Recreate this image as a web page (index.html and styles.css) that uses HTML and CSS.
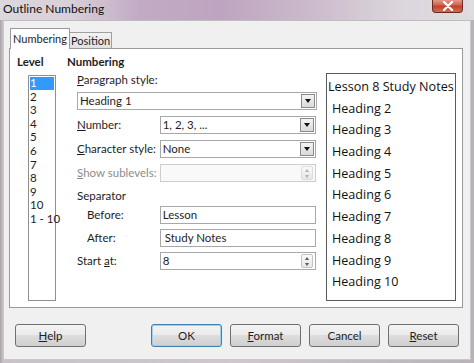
FILE: index.html
```html
<!DOCTYPE html>
<html>
<head>
<meta charset="utf-8">
<link rel="stylesheet" href="styles.css">
</head>
<body>
<div class="window">
  <div class="titlebar">
    <span class="title">Outline Numbering</span>
    <div class="close"><svg width="12" height="10" viewBox="0 0 12 10"><path d="M2 1 L10 9 M10 1 L2 9" stroke="#fff" stroke-width="2.4" stroke-linecap="round"/></svg></div>
  </div>
  <div class="client">
    <div class="tabs">
      <div class="tab active">Numbering</div>
      <div class="tab">Position</div>
    </div>
    <div class="tabpage">
      <div class="levelcol">
        <div class="heading">Level</div>
        <div class="levellist">
          <div class="item sel">1</div>
          <div class="item">2</div>
          <div class="item">3</div>
          <div class="item">4</div>
          <div class="item">5</div>
          <div class="item">6</div>
          <div class="item">7</div>
          <div class="item">8</div>
          <div class="item">9</div>
          <div class="item">10</div>
          <div class="item">1 - 10</div>
        </div>
      </div>
      <div class="numcol">
        <div class="heading">Numbering</div>
        <div class="plabel"><u>P</u>aragraph style:</div>
        <div class="combo wide"><span class="val">Heading 1</span><span class="drop"><i></i></span></div>
        <div class="row"><span class="lbl"><u>N</u>umber:</span><div class="combo"><span class="val">1, 2, 3, ...</span><span class="drop"><i></i></span></div></div>
        <div class="row"><span class="lbl"><u>C</u>haracter style:</span><div class="combo"><span class="val">None</span><span class="drop"><i></i></span></div></div>
        <div class="row"><span class="lbl dis"><u>S</u>how sublevels:</span><div class="field disabled"><span class="val"></span><span class="spin dis"><b class="up"></b><b class="dn"></b></span></div></div>
        <div class="seprow">Separator</div>
        <div class="row r23 first23"><span class="lbl ind">Before:</span><div class="field"><span class="val">Lesson</span></div></div>
        <div class="row r23"><span class="lbl ind">After:</span><div class="field"><span class="val sp">Study Notes</span></div></div>
        <div class="row r23"><span class="lbl">Start <u>a</u>t:</span><div class="field"><span class="val">8</span><span class="spin"><b class="up"></b><b class="dn"></b></span></div></div>
      </div>
      <div class="preview">
        <div class="pline first">Lesson 8 Study Notes</div>
        <div class="pline">Heading 2</div>
        <div class="pline">Heading 3</div>
        <div class="pline">Heading 4</div>
        <div class="pline">Heading 5</div>
        <div class="pline">Heading 6</div>
        <div class="pline">Heading 7</div>
        <div class="pline">Heading 8</div>
        <div class="pline">Heading 9</div>
        <div class="pline">Heading 10</div>
      </div>
    </div>
    <div class="buttons">
      <div class="btn"><u>H</u>elp</div>
      <div class="spacer"></div>
      <div class="btn default">OK</div>
      <div class="btn"><u>F</u>ormat</div>
      <div class="btn">Cancel</div>
      <div class="btn"><u>R</u>eset</div>
    </div>
  </div>
</div>
</body>
</html>
```
FILE: styles.css
```css
* { box-sizing: border-box; }
html, body { margin: 0; padding: 0; }
body {
  width: 474px; height: 363px; overflow: hidden;
  font-family: Lato, "Open Sans", sans-serif;
  font-size: 11.5px; color: #1e1e1e;
}
u { text-decoration: underline; text-underline-offset: 1px; }
.window {
  width: 474px; height: 363px;
  background: linear-gradient(90deg, #a9a4a9 0, #c9c2c9 3px, #cfc6cf 50%, #b9b2b9 100%);
  display: flex; flex-direction: column;
}
.titlebar {
  height: 20px; position: relative;
  background: linear-gradient(90deg, #dcd8dc 0, #d8d0d8 70px, #c2aac4 140px, #bea4c0 220px, #cdbdcd 320px, #dcd6dc 400px, #dedcde 474px);
}
.title {
  position: absolute; left: 3px; top: 1px;
  font-size: 12px; color: #111; line-height: 16px;
}
.close {
  position: absolute; left: 432px; top: -1px; width: 31px; height: 14px;
  background: linear-gradient(180deg, #e5a497 0, #d2644f 45%, #c1402c 55%, #d46b53 100%);
  border: 1px solid #6a2a20; border-top: none;
  border-radius: 0 0 4px 4px;
  display: flex; align-items: center; justify-content: center;
}
.client {
  margin: 0 3px 3px 3px; flex: 1;
  background: #f0f0f0;
  border: 1px solid #c8c8c8; border-top: 1px solid #bdbdbd;
  display: flex; flex-direction: column;
  padding: 0 7px 0 5px;
}
.tabs { display: flex; align-items: flex-end; height: 27px; padding-left: 1px; }
.tab {
  height: 16px; padding: 0 1px; line-height: 15px; font-size: 11px;
  border: 1px solid #a0a0a0; border-bottom: none;
  background: linear-gradient(180deg, #f2f2f2, #e1e1e1);
  margin-left: -1px;
}
.tab.active {
  height: 21px; background: #fff; padding: 0 2px; line-height: 20px;
  position: relative; top: 1px; z-index: 1; margin-left: 0;
  border-color: #9a9a9a;
}
.tabpage {
  height: 260px; background: #fff; border: 1px solid #9a9a9a;
  display: flex; padding: 6px 0 0 7px;
}
.heading { font-weight: bold; height: 14px; line-height: 14px; }
.levelcol { width: 50px; }
.levellist {
  margin: 6px 0 0 11px; width: 28px; height: 226px;
  border: 1px solid #8f8f8f; background: #fff; padding: 0;
}
.item { height: 13.6px; line-height: 13.6px; padding-left: 1px; white-space: nowrap; }
.item.sel { background: #3399ff; color: #fff; margin: 1px 1px 0; padding-left: 0; height: 12.6px; line-height: 12.6px; }
.numcol { width: 249px; display: flex; flex-direction: column; }
.plabel { margin: 4px 0 0 10px; height: 14px; line-height: 14px; }
.combo, .field {
  height: 18px; border: 1px solid #a8a8a8; background: #fff;
  display: flex; align-items: stretch;
}
.combo.wide { margin: 5px 0 0 10px; width: 240px; }
.val { flex: 1; padding-left: 2px; line-height: 16px; white-space: nowrap; }
.val.sp { padding-left: 4px; }
.drop {
  width: 14px; margin: 1px; border: 1px solid #8a8a8a;
  background: linear-gradient(180deg, #f4f4f4, #dadada);
  display: flex; align-items: center; justify-content: center;
}
.drop i { width: 0; height: 0; border-left: 3.5px solid transparent; border-right: 3.5px solid transparent; border-top: 4px solid #111; }
.row { display: flex; align-items: center; margin-top: 6px; height: 18px; }
.row.r23 { margin-top: 5px; }
.row.first23 { margin-top: 3px; }
.lbl { width: 93px; padding-left: 10px; line-height: 14px; }
.lbl.ind { padding-left: 20px; }
.lbl.dis { color: #8c8c8c; }
.row .combo, .row .field { width: 157px; }
.field.disabled { border-color: #cdcdcd; background: #f9f9f9; }
.seprow { margin: 7px 0 0 10px; height: 14px; line-height: 14px; }
.spin { width: 12px; margin: 1px 2px 1px 0; display: flex; flex-direction: column; border: 1px solid #c4c4c4; border-radius: 2px; background: linear-gradient(180deg, #fafafa, #e6e6e6); }
.spin b { flex: 1; display: flex; align-items: center; justify-content: center; }
.spin b::after { content: ""; width: 0; height: 0; border-left: 2.5px solid transparent; border-right: 2.5px solid transparent; }
.spin .up::after { border-bottom: 3px solid #556; }
.spin .dn::after { border-top: 3px solid #556; }
.spin.dis { border-color: #dcdcdc; }
.spin.dis .up::after { border-bottom-color: #b0b0b0; }
.spin.dis .dn::after { border-top-color: #b0b0b0; }
.preview {
  margin: 18px 0 0 10px; width: 130px; height: 228px;
  border: 1px solid #5a5a5a; padding-top: 2px; overflow: hidden;
}
.pline { height: 21.7px; line-height: 21.7px; font-family: "Open Sans", sans-serif; font-size: 12.6px; padding-left: 5px; white-space: nowrap; color: #111; }
.pline.first { padding-left: 1px; }
.buttons { display: flex; margin-top: 16px; padding-left: 6px; gap: 8px; }
.spacer { width: 49px; }
.btn {
  width: 71px; height: 23px; border: 1px solid #707070; border-radius: 3px;
  background: linear-gradient(180deg, #f3f3f3 0, #ebebeb 45%, #dddddd 50%, #cfcfcf 100%);
  text-align: center; line-height: 21px;
}
.btn.default { border-color: #3c7fb1; box-shadow: inset 0 0 0 1px #9ad2f0; }
```
